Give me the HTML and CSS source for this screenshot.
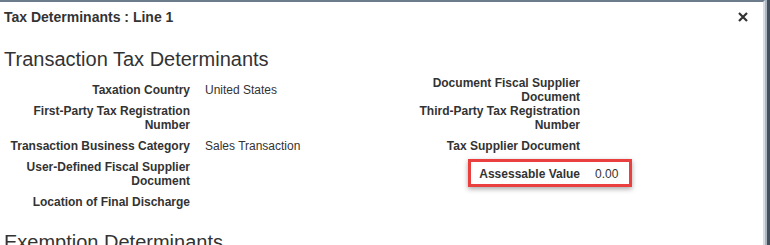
FILE: index.html
```html
<!DOCTYPE html>
<html lang="en">
<head>
<meta charset="utf-8">
<title>Tax Determinants : Line 1</title>
<link rel="stylesheet" href="styles.css">
</head>
<body>
<div class="screen">
  <div class="dialog">
    <header class="dialog-header">
      <h1 class="dialog-title">Tax Determinants : Line 1</h1>
      <button class="close" type="button" aria-label="Close">
        <svg width="10" height="10" viewBox="0 0 10 10"><path d="M1 1 L9 9 M9 1 L1 9" stroke="#333" stroke-width="2.2" fill="none"/></svg>
      </button>
    </header>
    <section class="section">
      <h2 class="section-title">Transaction Tax Determinants</h2>
      <div class="form">
        <div class="form-col form-col-left">
          <div class="row"><span class="label">Taxation Country</span><span class="value">United States</span></div>
          <div class="row"><span class="label">First-Party Tax Registration Number</span><span class="value"></span></div>
          <div class="row"><span class="label">Transaction Business Category</span><span class="value">Sales Transaction</span></div>
          <div class="row"><span class="label">User-Defined Fiscal Supplier Document</span><span class="value"></span></div>
          <div class="row"><span class="label">Location of Final Discharge</span><span class="value"></span></div>
        </div>
        <div class="form-col form-col-right">
          <div class="row row-joined"><span class="label">Document Fiscal Supplier Document</span><span class="value"></span></div>
          <div class="row"><span class="label">Third-Party Tax Registration Number</span><span class="value"></span></div>
          <div class="row"><span class="label">Tax Supplier Document</span><span class="value"></span></div>
          <div class="row row-highlight"><span class="label">Assessable Value</span><span class="value">0.00</span></div>
        </div>
      </div>
    </section>
    <section class="section">
      <h2 class="section-title">Exemption Determinants</h2>
    </section>
  </div>
</div>
</body>
</html>
```
FILE: styles.css
```css
html, body {
  margin: 0;
  padding: 0;
  height: 245px;
  overflow: hidden;
}

body {
  font-family: "Liberation Sans", Arial, sans-serif;
  color: #333;
}

.screen {
  display: flex;
  height: 245px;
  background: linear-gradient(to right, #aab6c2 0 767px, #44505b 767px);
}

.dialog {
  width: 763px;
  background: #fff;
  border-top: 2px solid #6d7c8b;
  border-right: 2px solid #d9dde2;
}

.dialog-header {
  display: flex;
  justify-content: space-between;
  align-items: center;
  padding: 7px 15px 0 4px;
}

.dialog-title {
  margin: 0;
  font-size: 14px;
  line-height: 17px;
  font-weight: bold;
  color: #333;
}

.close {
  display: flex;
  padding: 0;
  border: 0;
  background: none;
  margin-top: -1px;
}

.section {
  padding-left: 4px;
}

.section-title {
  margin: 21px 0 0;
  font-size: 20px;
  line-height: 24px;
  font-weight: normal;
  color: #333;
}

.form {
  display: flex;
  align-items: flex-start;
  margin-top: 5px;
  font-size: 12px;
  line-height: 14px;
}

.form-col {
  display: flex;
  flex-direction: column;
  gap: 7px;
}

.form-col-left {
  width: 396px;
  padding-top: 7px;
}

.form-col-left .row {
  grid-template-columns: 186px 1fr;
}

.form-col-right .row {
  grid-template-columns: 180px 1fr;
}

.row {
  display: grid;
  column-gap: 15px;
}

.label {
  text-align: right;
  font-weight: bold;
  color: #333;
}

.value {
  color: #333;
}

.row-joined {
  margin-bottom: -7px;
}

.row-highlight {
  position: relative;
  margin-top: 7px;
}

.row-highlight::after {
  content: "";
  position: absolute;
  left: 68px;
  top: -8px;
  width: 164px;
  height: 28px;
  box-sizing: border-box;
  border: 3px solid #e9403f;
  box-shadow: 0 2px 5px rgba(0, 0, 0, 0.35);
}
```
